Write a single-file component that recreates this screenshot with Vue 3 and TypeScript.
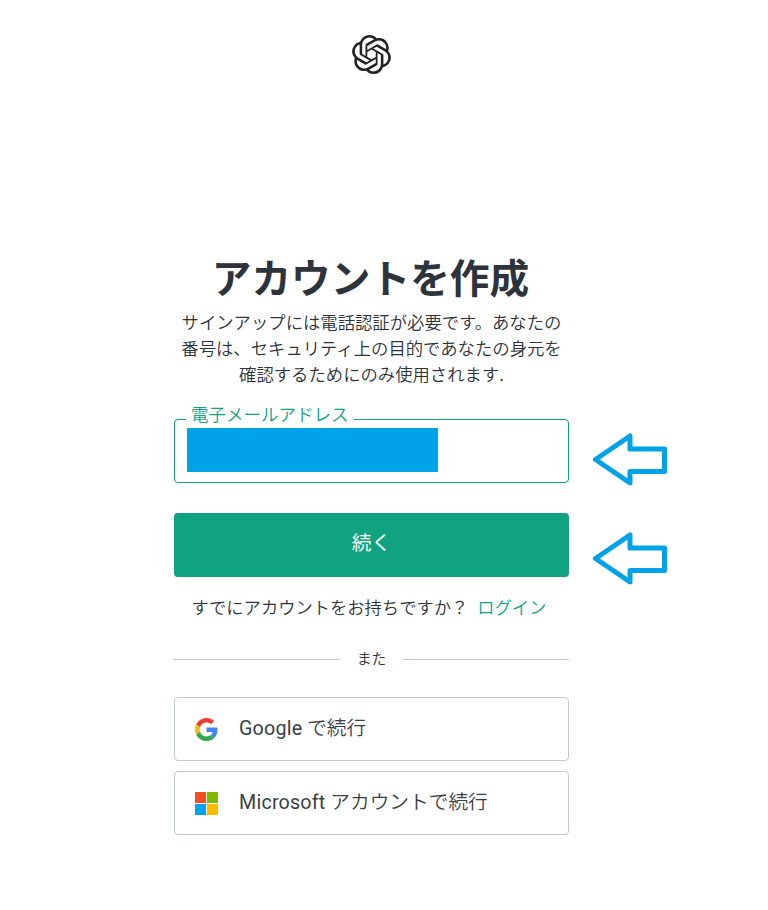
<script setup lang="ts">
interface Provider {
  id: 'google' | 'microsoft'
  name: string
  suffix: string
}

const description: string[] = [
  'サインアップには電話認証が必要です。あなたの',
  '番号は、セキュリティ上の目的であなたの身元を',
  '確認するためにのみ使用されます.',
]

const providers: Provider[] = [
  { id: 'google', name: 'Google', suffix: 'で続行' },
  { id: 'microsoft', name: 'Microsoft', suffix: 'アカウントで続行' },
]
</script>

<template>
  <main class="page">
    <header class="brand">
      <svg class="logo" viewBox="0 0 24 24" aria-label="OpenAI">
        <path d="M22.2819 9.8211a5.9847 5.9847 0 0 0-.5157-4.9108 6.0462 6.0462 0 0 0-6.5098-2.9A6.0651 6.0651 0 0 0 4.9807 4.1818a5.9847 5.9847 0 0 0-3.9977 2.9 6.0462 6.0462 0 0 0 .7427 7.0966 5.98 5.98 0 0 0 .511 4.9107 6.051 6.051 0 0 0 6.5146 2.9001A5.9847 5.9847 0 0 0 13.2599 24a6.0557 6.0557 0 0 0 5.7718-4.2058 5.9894 5.9894 0 0 0 3.9977-2.9001 6.0557 6.0557 0 0 0-.7475-7.073zm-9.022 12.6081a4.4755 4.4755 0 0 1-2.8764-1.0408l.1419-.0804 4.7783-2.7582a.7948.7948 0 0 0 .3927-.6813v-6.7369l2.02 1.1686a.071.071 0 0 1 .038.052v5.5826a4.504 4.504 0 0 1-4.4945 4.4944zm-9.6607-4.1254a4.4708 4.4708 0 0 1-.5346-3.0137l.142.0852 4.783 2.7582a.7712.7712 0 0 0 .7806 0l5.8428-3.3685v2.3324a.0804.0804 0 0 1-.0332.0615L9.74 19.9502a4.4992 4.4992 0 0 1-6.1408-1.6464zM2.3408 7.8956a4.485 4.485 0 0 1 2.3655-1.9728V11.6a.7664.7664 0 0 0 .3879.6765l5.8144 3.3543-2.0201 1.1685a.0757.0757 0 0 1-.071 0l-4.8303-2.7865A4.504 4.504 0 0 1 2.3408 7.872zm16.5963 3.8558L13.1038 8.364 15.1192 7.2a.0757.0757 0 0 1 .071 0l4.8303 2.7913a4.4944 4.4944 0 0 1-.6765 8.1042v-5.6772a.79.79 0 0 0-.407-.667zm2.0107-3.0231l-.142-.0852-4.7735-2.7818a.7759.7759 0 0 0-.7854 0L9.409 9.2297V6.8974a.0662.0662 0 0 1 .0284-.0615l4.8303-2.7866a4.4992 4.4992 0 0 1 6.6802 4.66zM8.3065 12.863l-2.02-1.1638a.0804.0804 0 0 1-.038-.0567V6.0742a4.4992 4.4992 0 0 1 7.3757-3.4537l-.142.0805L8.704 5.459a.7948.7948 0 0 0-.3927.6813zm1.0976-2.3654l2.602-1.4998 2.6069 1.4998v2.9994l-2.5974 1.4997-2.6067-1.4997Z" />
      </svg>
    </header>

    <section class="panel">
      <h1 class="title">アカウントを作成</h1>
      <p class="description">
        <span v-for="line in description" :key="line" class="line">{{ line }}</span>
      </p>

      <div class="field">
        <span class="field-label">電子メールアドレス</span>
        <div class="redaction"></div>
        <svg class="arrow" viewBox="0 0 76 54">
          <path d="M3.5 26.5 38 3v13h34.5v22.5H38V50z" />
        </svg>
      </div>

      <div class="submit">
        <button class="continue" type="button">続く</button>
        <svg class="arrow" viewBox="0 0 76 54">
          <path d="M3.5 26.5 38 3v13h34.5v22.5H38V50z" />
        </svg>
      </div>

      <p class="login">すでにアカウントをお持ちですか？<a class="login-link">ログイン</a></p>

      <div class="divider"><span>また</span></div>

      <div class="providers">
        <button v-for="provider in providers" :key="provider.id" class="provider" type="button">
          <svg v-if="provider.id === 'google'" class="provider-icon" viewBox="0 0 48 48">
            <path fill="#ea4335" d="M24 9.5c3.54 0 6.71 1.22 9.21 3.6l6.85-6.85C35.9 2.38 30.47 0 24 0 14.62 0 6.51 5.38 2.56 13.22l7.98 6.19C12.43 13.72 17.74 9.5 24 9.5z" />
            <path fill="#4285f4" d="M46.98 24.55c0-1.57-.15-3.09-.38-4.55H24v9.02h12.94c-.58 2.96-2.26 5.48-4.78 7.18l7.73 6c4.51-4.18 7.09-10.36 7.09-17.65z" />
            <path fill="#fbbc05" d="M10.53 28.59c-.48-1.45-.76-2.99-.76-4.59s.27-3.14.76-4.59l-7.98-6.19C.92 16.46 0 20.12 0 24c0 3.88.92 7.54 2.56 10.78l7.97-6.19z" />
            <path fill="#34a853" d="M24 48c6.48 0 11.93-2.13 15.89-5.81l-7.73-6c-2.15 1.45-4.92 2.3-8.16 2.3-6.26 0-11.57-4.22-13.47-9.91l-7.98 6.19C6.51 42.62 14.62 48 24 48z" />
          </svg>
          <svg v-else class="provider-icon" viewBox="0 0 23 23">
            <path fill="#f25022" d="M0 0h11v11H0z" />
            <path fill="#7fba00" d="M12 0h11v11H12z" />
            <path fill="#00a4ef" d="M0 12h11v11H0z" />
            <path fill="#ffb900" d="M12 12h11v11H12z" />
          </svg>
          <span class="provider-label"><span class="provider-name">{{ provider.name }}</span> {{ provider.suffix }}</span>
        </button>
      </div>
    </section>
  </main>
</template>

<style>
body {
  margin: 0;
  background: #fff;
}
</style>

<style scoped>
.page {
  box-sizing: border-box;
  width: 768px;
  height: 910px;
  padding: 35px 0 0 174px;
  overflow: hidden;
  color: #2d333a;
  font-family: Roboto, "Noto Sans CJK JP", sans-serif;
  font-weight: 350;
}

.brand,
.panel {
  width: 395px;
}

.brand {
  display: flex;
  justify-content: center;
  height: 215px;
}

.logo {
  width: 39px;
  height: 39px;
  fill: #202123;
}

.title {
  margin: 0 2px 0 0;
  font-family: "Noto Sans CJK JP", sans-serif;
  font-size: 39.7px;
  font-weight: 700;
  line-height: 52px;
  text-align: center;
  white-space: nowrap;
}

.description {
  margin: 6.5px 0 0;
  font-family: "Noto Sans CJK JP", sans-serif;
  font-size: 17.35px;
  line-height: 26.2px;
  text-align: center;
}

.line {
  display: block;
  white-space: nowrap;
}

.field {
  position: relative;
  box-sizing: border-box;
  height: 64px;
  margin-top: 31.9px;
  padding: 8px 12px;
  border: 1px solid #10a37f;
  border-radius: 4px;
}

.field-label {
  position: absolute;
  top: -16px;
  left: 10.5px;
  padding: 0 5.5px;
  background: #fff;
  color: #10a37f;
  font-size: 17.5px;
  line-height: 23px;
  white-space: nowrap;
}

.redaction {
  width: 251px;
  height: 44px;
  background: #00a2e8;
}

.arrow {
  position: absolute;
  top: 13px;
  left: 417px;
  width: 76px;
  height: 54px;
  fill: none;
  stroke: #00a2e8;
  stroke-width: 5;
  stroke-linejoin: round;
}

.submit {
  position: relative;
  margin-top: 30px;
}

.submit .arrow {
  top: 19px;
  left: 418px;
}

.continue {
  display: block;
  width: 100%;
  height: 64px;
  padding: 0 0 7px;
  border: 0;
  border-radius: 4px;
  background: #10a37f;
  color: #fff;
  font-family: inherit;
  font-size: 19.7px;
  font-weight: 400;
}

.login {
  display: flex;
  gap: 9px;
  justify-content: center;
  margin: 18px 5px 0 0;
  font-size: 17.3px;
  line-height: 26px;
  white-space: nowrap;
}

.login-link {
  color: #10a37f;
}

.divider {
  display: flex;
  align-items: center;
  gap: 17px;
  height: 24px;
  margin-top: 26px;
  font-size: 14.8px;
  line-height: 24px;
}

.divider::before,
.divider::after {
  flex: 1;
  height: 1px;
  background: #c2c8d0;
  content: "";
}

.providers {
  display: flex;
  flex-direction: column;
  gap: 10px;
  margin-top: 26px;
}

.provider {
  display: flex;
  align-items: center;
  gap: 21px;
  box-sizing: border-box;
  width: 100%;
  height: 64px;
  padding: 0 20px;
  border: 1px solid #c2c8d0;
  border-radius: 4px;
  background: #fff;
  color: #393f46;
  font-family: inherit;
  font-size: 19.7px;
  font-weight: inherit;
  white-space: nowrap;
}

.provider-label {
  padding-bottom: 5px;
}

.provider-name {
  font-weight: 400;
  letter-spacing: 0.2px;
}

.provider-icon {
  width: 23px;
  height: 23px;
}
</style>
